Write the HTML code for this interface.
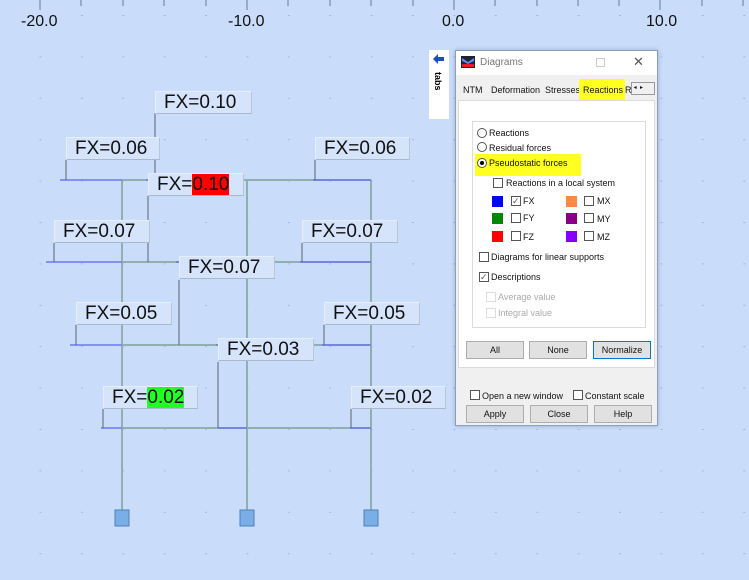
<!DOCTYPE html>
<html><head><meta charset="utf-8"><style>
*{margin:0;padding:0;box-sizing:border-box}
body{width:749px;height:580px;overflow:hidden;background:#c9ddfb;font-family:"Liberation Sans",sans-serif;position:relative}
.lbl{position:absolute;height:23px;background:#d5e4fb;border:1px solid #e6eefc;border-bottom-color:#a9b8cc;border-right-color:#b8c6d8;font-size:19px;line-height:22px;padding-left:8px;color:#111;white-space:nowrap}
.ax{position:absolute;top:13px;font-size:16px;color:#111}
.dlg{position:absolute;left:455px;top:50px;width:203px;height:376px;background:#f0f0f0;border:1px solid #8aa0c0;box-shadow:0 0 4px rgba(0,0,0,.25);font-size:9px;color:#111}
.t{position:absolute;white-space:nowrap}
.cb{position:absolute;width:10px;height:10px;border:1px solid #555;background:#fff}
.rb{position:absolute;width:10px;height:10px;border:1px solid #555;border-radius:50%;background:#fff}
.sw{position:absolute;width:11px;height:11px}
.btn{position:absolute;height:18px;background:#e1e1e1;border:1px solid #adadad;text-align:center;line-height:16px;font-size:9px}
</style></head><body>
<svg width="749" height="580" style="position:absolute;left:0;top:0">
<defs><pattern id="g" x="0" y="15" width="41.4" height="41.4" patternUnits="userSpaceOnUse"><rect x="39.5" y="0" width="2" height="1" fill="#9fb3ee"/></pattern></defs>
<rect width="749" height="580" fill="url(#g)"/>
<g stroke="#6b7a8c" stroke-width="1">
<line x1="40" y1="0" x2="40" y2="10"/><line x1="247" y1="0" x2="247" y2="10"/><line x1="454" y1="0" x2="454" y2="10"/><line x1="660" y1="0" x2="660" y2="10"/>
<line x1="81" y1="0" x2="81" y2="6"/><line x1="123" y1="0" x2="123" y2="6"/><line x1="164" y1="0" x2="164" y2="6"/><line x1="206" y1="0" x2="206" y2="6"/>
<line x1="288" y1="0" x2="288" y2="6"/><line x1="330" y1="0" x2="330" y2="6"/><line x1="371" y1="0" x2="371" y2="6"/><line x1="413" y1="0" x2="413" y2="6"/>
<line x1="495" y1="0" x2="495" y2="6"/><line x1="537" y1="0" x2="537" y2="6"/><line x1="578" y1="0" x2="578" y2="6"/><line x1="619" y1="0" x2="619" y2="6"/><line x1="702" y1="0" x2="702" y2="6"/><line x1="743" y1="0" x2="743" y2="6"/>
</g>
<g stroke="#8fafb0" stroke-width="2">
<line x1="122" y1="180" x2="122" y2="512"/><line x1="247" y1="180" x2="247" y2="512"/><line x1="371" y1="180" x2="371" y2="512"/>
<line x1="122" y1="180" x2="371" y2="180"/><line x1="122" y1="262" x2="371" y2="262"/><line x1="122" y1="345" x2="371" y2="345"/><line x1="122" y1="428" x2="371" y2="428"/>
</g>
<g stroke="#6b78f0" stroke-width="1.5">
<line x1="60" y1="180" x2="122" y2="180"/><line x1="46" y1="262" x2="122" y2="262"/><line x1="70" y1="345" x2="122" y2="345"/><line x1="101" y1="428" x2="122" y2="428"/>
<line x1="313" y1="180" x2="371" y2="180"/><line x1="300" y1="262" x2="371" y2="262"/><line x1="322" y1="345" x2="371" y2="345"/><line x1="350" y1="428" x2="371" y2="428"/>
<line x1="146" y1="180" x2="160" y2="180"/><line x1="176" y1="262" x2="190" y2="262"/><line x1="216" y1="345" x2="247" y2="345"/><line x1="218" y1="428" x2="247" y2="428"/>
</g>
<g stroke="#5b6470" stroke-width="1" fill="none">
<path d="M66 160V180M155 113V180M315 160V180M148 196V262M54 243V262M302 243V262M179 280V345M76 325V345M324 325V345M218 362V428M103 409V428M351 409V428"/>
</g>
<g fill="#7aaee6" stroke="#4f7fb8"><rect x="115" y="510" width="14" height="16"/><rect x="240" y="510" width="14" height="16"/><rect x="364" y="510" width="14" height="16"/></g>
</svg>
<div class="ax" style="left:21px">-20.0</div><div class="ax" style="left:228px">-10.0</div><div class="ax" style="left:442px">0.0</div><div class="ax" style="left:646px">10.0</div>
<div class="lbl" style="left:155px;top:91px;width:97px">FX=0.10</div>
<div class="lbl" style="left:66px;top:137px;width:94px">FX=0.06</div>
<div class="lbl" style="left:315px;top:137px;width:95px">FX=0.06</div>
<div class="lbl" style="left:148px;top:173px;width:96px">FX=<span style="background:#f00">0.10</span></div>
<div class="lbl" style="left:54px;top:220px;width:96px">FX=0.07</div>
<div class="lbl" style="left:302px;top:220px;width:96px">FX=0.07</div>
<div class="lbl" style="left:179px;top:256px;width:96px">FX=0.07</div>
<div class="lbl" style="left:76px;top:302px;width:96px">FX=0.05</div>
<div class="lbl" style="left:324px;top:302px;width:96px">FX=0.05</div>
<div class="lbl" style="left:218px;top:338px;width:96px">FX=0.03</div>
<div class="lbl" style="left:103px;top:386px;width:95px">FX=<span style="background:#2f2">0.02</span></div>
<div class="lbl" style="left:351px;top:386px;width:95px">FX=0.02</div>
<div style="position:absolute;left:429px;top:50px;width:20px;height:69px;background:#fff"><svg width="20" height="20"><path d="M4 9L9 4V7H15V11H9V14Z" fill="#1a50c0"/></svg><div style="position:absolute;left:3px;top:22px;font-size:9px;font-weight:bold;transform:rotate(90deg);transform-origin:left top;left:14px">tabs</div></div>
<div class="dlg">
<div style="position:absolute;left:0;top:0;width:201px;height:24px;background:#fff"></div>
<svg style="position:absolute;left:5px;top:5px" width="14" height="12"><rect width="14" height="12" fill="#223"/><path d="M1 2L7 6L13 2V5L7 8L1 5Z" fill="#5b8cf0"/><rect x="1" y="8" width="12" height="3" fill="#e02020"/></svg>
<div class="t" style="left:24px;top:6px;font-size:10px;color:#777">Diagrams</div>
<div style="position:absolute;left:140px;top:7px;width:9px;height:9px;border:1px solid #ccc"></div>
<div class="t" style="left:177px;top:3px;font-size:13px;color:#555">✕</div>
<div class="t" style="left:7px;top:34px">NTM</div><div class="t" style="left:35px;top:34px">Deformation</div><div class="t" style="left:89px;top:34px">Stresses</div>
<div style="position:absolute;left:123px;top:28px;width:46px;height:22px;background:#ffff20"></div>
<div class="t" style="left:127px;top:34px">Reactions</div><div class="t" style="left:169px;top:34px">R</div>
<div style="position:absolute;left:175px;top:31px;width:24px;height:13px;border:1px solid #999;background:#f0f0f0;font-size:6px;line-height:11px">&nbsp;◂ &nbsp;▸</div>
<div style="position:absolute;left:2px;top:49px;width:197px;height:268px;background:#fff;border:1px solid #dcdcdc"></div>
<div style="position:absolute;left:16px;top:70px;width:174px;height:207px;border:1px solid #dcdcdc"></div>
<div style="position:absolute;left:19px;top:103px;width:106px;height:22px;background:#ffff20"></div>
<div class="rb" style="left:21px;top:77px"></div><div class="t" style="left:33px;top:77px">Reactions</div>
<div class="rb" style="left:21px;top:91px"></div><div class="t" style="left:33px;top:92px">Residual forces</div>
<div class="rb" style="left:21px;top:107px"><div style="margin:2px;width:4px;height:4px;border-radius:50%;background:#000"></div></div><div class="t" style="left:33px;top:107px">Pseudostatic forces</div>
<div class="cb" style="left:37px;top:127px"></div><div class="t" style="left:50px;top:127px">Reactions in a local system</div>
<div class="sw" style="left:36px;top:145px;background:#00f"></div><div class="cb" style="left:55px;top:145px;font-size:9px;line-height:8px;color:#555">✓</div><div class="t" style="left:67px;top:145px">FX</div>
<div class="sw" style="left:36px;top:162px;background:#080"></div><div class="cb" style="left:55px;top:162px"></div><div class="t" style="left:67px;top:162px">FY</div>
<div class="sw" style="left:36px;top:180px;background:#f00"></div><div class="cb" style="left:55px;top:180px"></div><div class="t" style="left:67px;top:181px">FZ</div>
<div class="sw" style="left:110px;top:145px;background:#f84"></div><div class="cb" style="left:128px;top:145px"></div><div class="t" style="left:141px;top:145px">MX</div>
<div class="sw" style="left:110px;top:162px;background:#808"></div><div class="cb" style="left:128px;top:162px"></div><div class="t" style="left:141px;top:163px">MY</div>
<div class="sw" style="left:110px;top:180px;background:#80f"></div><div class="cb" style="left:128px;top:180px"></div><div class="t" style="left:141px;top:181px">MZ</div>
<div class="cb" style="left:23px;top:201px"></div><div class="t" style="left:35px;top:201px">Diagrams for linear supports</div>
<div class="cb" style="left:23px;top:221px;font-size:9px;line-height:8px;color:#555">✓</div><div class="t" style="left:35px;top:221px">Descriptions</div>
<div class="cb" style="left:30px;top:241px;border-color:#ddd"></div><div class="t" style="left:42px;top:241px;color:#aaa">Average value</div>
<div class="cb" style="left:30px;top:257px;border-color:#ddd"></div><div class="t" style="left:42px;top:257px;color:#aaa">Integral value</div>
<div class="btn" style="left:10px;top:290px;width:58px">All</div>
<div class="btn" style="left:73px;top:290px;width:58px">None</div>
<div class="btn" style="left:137px;top:290px;width:58px;border-color:#0078d7">Normalize</div>
<div class="cb" style="left:14px;top:339px"></div><div class="t" style="left:26px;top:340px">Open a new window</div>
<div class="cb" style="left:117px;top:339px"></div><div class="t" style="left:129px;top:340px">Constant scale</div>
<div class="btn" style="left:10px;top:354px;width:58px">Apply</div>
<div class="btn" style="left:74px;top:354px;width:58px">Close</div>
<div class="btn" style="left:138px;top:354px;width:58px">Help</div>
</div>
</body></html>
